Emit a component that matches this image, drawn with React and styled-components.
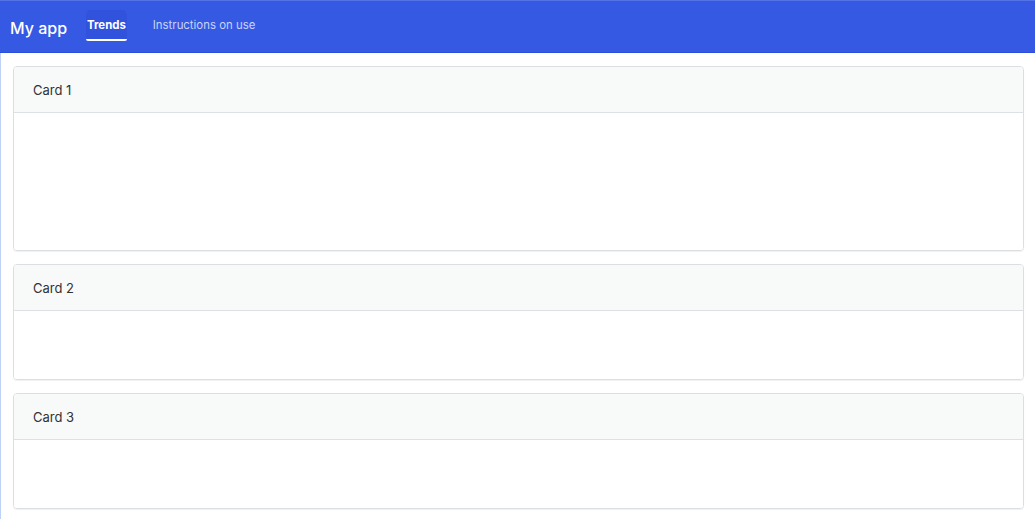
import React from 'react'
import styled, { createGlobalStyle } from 'styled-components'

const GlobalStyle = createGlobalStyle`
  * { box-sizing: border-box; }
  body {
    margin: 0;
    background: #fff;
    font-family: Inter, "Noto Sans", sans-serif;
    color: #333;
  }
`

const Page = styled.div`
  min-height: 519px;
  display: flex;
  flex-direction: column;
`

const NavBar = styled.nav`
  height: 53px;
  display: flex;
  align-items: center;
  gap: 19px;
  padding: 0 10px;
  background: #3659e4;
  border-top: 1px solid #5473e8;
  border-bottom: 1px solid #2b4fdc;
`

const Brand = styled.div`
  color: #fff;
  font-size: 16px;
  font-weight: 500;
  margin-top: 2px;
`

const Tabs = styled.div`
  display: flex;
  align-items: center;
  gap: 26px;
`

const Tab = styled.div`
  position: relative;
  height: 31px;
  display: flex;
  align-items: center;
  padding: 0 ${p => (p.$active ? '1px' : '0')};
  border-radius: 5px;
  font-size: 11.4px;
  font-weight: ${p => (p.$active ? 700 : 400)};
  color: ${p => (p.$active ? '#fff' : '#c9d4f7')};
  background: ${p => (p.$active ? '#3152dc' : 'transparent')};
  margin-top: -3px;

  &::after {
    content: '';
    display: ${p => (p.$active ? 'block' : 'none')};
    position: absolute;
    left: 0;
    right: 0;
    bottom: 0;
    height: 2px;
    border-radius: 0 0 5px 5px;
    background: #fff;
  }
`

const Main = styled.main`
  flex: 1;
  display: flex;
  flex-direction: column;
  gap: 13px;
  padding: 13px 11px 10px 12px;
  border-left: 1px solid #bfd1f6;
`

const Card = styled.section`
  border: 1px solid #dcdfe2;
  border-radius: 4px;
  box-shadow: 0 1px 1px rgba(0, 0, 0, 0.06);
  overflow: hidden;
`

const CardHeader = styled.header`
  height: 46px;
  display: flex;
  align-items: center;
  padding: 0 19px;
  background: #f8f9f9;
  border-bottom: 1px solid #dee1e4;
  font-size: 13px;
  color: #2f3338;
`

const CardBody = styled.div`
  height: ${p => p.$height}px;
  background: #fff;
`

const cards = [
  { title: 'Card 1', body: 137 },
  { title: 'Card 2', body: 68 },
  { title: 'Card 3', body: 68 },
]

export default function App() {
  return (
    <>
      <GlobalStyle />
      <Page>
        <NavBar>
          <Brand>My app</Brand>
          <Tabs>
            <Tab $active>Trends</Tab>
            <Tab>Instructions on use</Tab>
          </Tabs>
        </NavBar>
        <Main>
          {cards.map(c => (
            <Card key={c.title}>
              <CardHeader>{c.title}</CardHeader>
              <CardBody $height={c.body} />
            </Card>
          ))}
        </Main>
      </Page>
    </>
  )
}
